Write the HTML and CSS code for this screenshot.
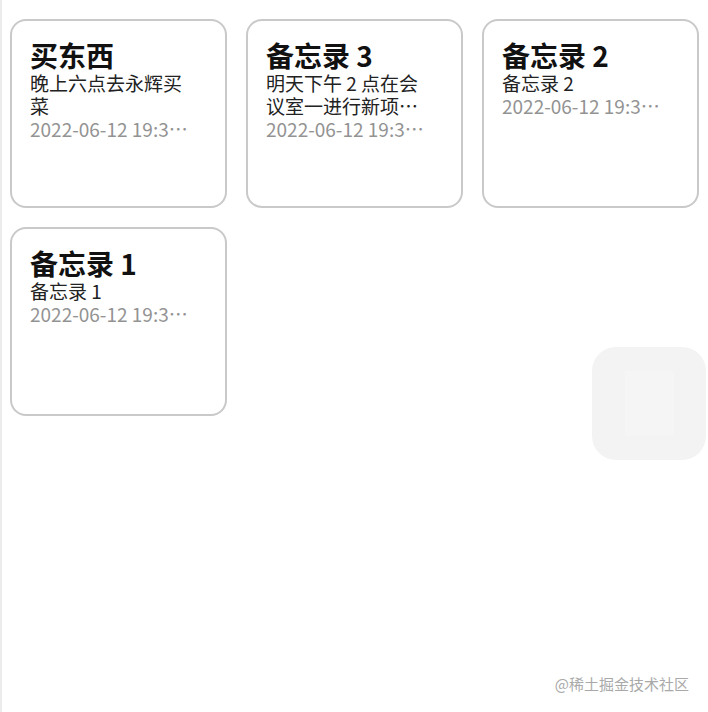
FILE: index.html
```html
<!DOCTYPE html>
<html lang="zh-CN">
<head>
<meta charset="utf-8">
<title>备忘录</title>
<link rel="stylesheet" href="styles.css">
</head>
<body>
<div class="page">
  <div class="grid">
    <div class="card">
      <div class="title">买东西</div>
      <div class="content">晚上六点去永辉买菜</div>
      <div class="date">2022-06-12 19:30:12</div>
    </div>
    <div class="card">
      <div class="title">备忘录 3</div>
      <div class="content">明天下午 2 点在会议室一进行新项目的需求评审会议</div>
      <div class="date">2022-06-12 19:30:12</div>
    </div>
    <div class="card">
      <div class="title">备忘录 2</div>
      <div class="content">备忘录 2</div>
      <div class="date">2022-06-12 19:30:12</div>
    </div>
    <div class="card">
      <div class="title">备忘录 1</div>
      <div class="content">备忘录 1</div>
      <div class="date">2022-06-12 19:30:12</div>
    </div>
  </div>
  <div class="fab"><div class="fab-inner"></div></div>
  <div class="watermark">@稀土掘金技术社区</div>
</div>
</body>
</html>
```
FILE: styles.css
```css
html, body {
  margin: 0;
  padding: 0;
  background: #ffffff;
}
body {
  font-family: "Noto Sans CJK SC", "Noto Sans", sans-serif;
}
.page {
  position: relative;
  width: 708px;
  height: 712px;
  box-sizing: border-box;
  border-left: 2px solid #ececec;
  overflow: hidden;
}
.grid {
  display: grid;
  grid-template-columns: repeat(3, 1fr);
  column-gap: 19px;
  row-gap: 19px;
  padding: 19px 9px 0 8px;
}
.card {
  box-sizing: border-box;
  height: 189px;
  border: 2px solid #c9c9c9;
  border-radius: 16px;
  padding: 19px 30px 18px 18px;
  background: #fff;
  min-width: 0;
}
.title {
  font-size: 28px;
  font-weight: 700;
  line-height: 30px;
  color: #111;
  white-space: nowrap;
}
.content {
  margin-top: 1px;
  font-size: 19px;
  line-height: 23px;
  color: #222;
  display: -webkit-box;
  -webkit-line-clamp: 2;
  -webkit-box-orient: vertical;
  overflow: hidden;
}
.date {
  font-size: 19px;
  line-height: 23px;
  color: #939393;
  white-space: nowrap;
  overflow: hidden;
  text-overflow: ellipsis;
}
.fab {
  position: absolute;
  left: 590px;
  top: 347px;
  width: 114px;
  height: 113px;
  border-radius: 24px;
  background: #f3f3f3;
  display: flex;
  align-items: center;
  justify-content: center;
}
.fab-inner {
  width: 49px;
  height: 65px;
  background: #f5f5f5;
}
.watermark {
  position: absolute;
  right: 19px;
  bottom: 18px;
  font-size: 15px;
  line-height: 20px;
  color: #a9a9a9;
}
```
